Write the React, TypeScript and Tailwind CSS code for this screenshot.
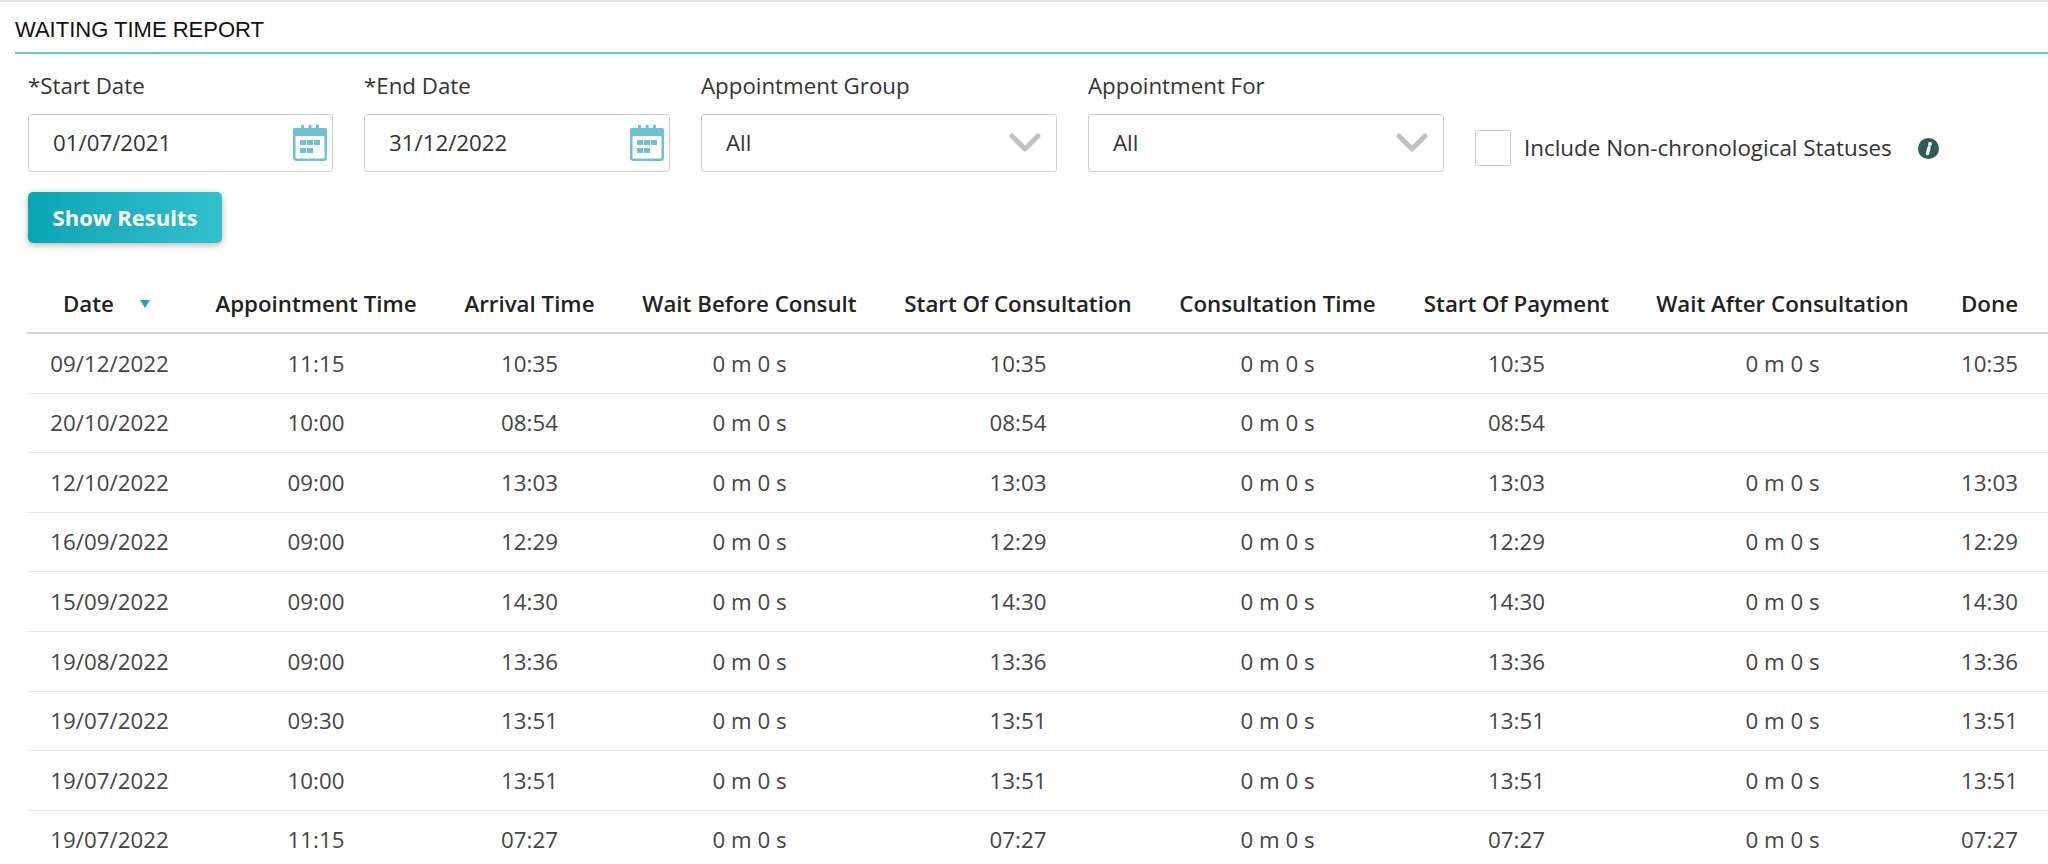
import React from 'react';

const COLS = 'grid grid-cols-[165px_248px_179px_261px_276px_243px_235px_297px_1fr]';

const HEADERS = [
  'Appointment Time',
  'Arrival Time',
  'Wait Before Consult',
  'Start Of Consultation',
  'Consultation Time',
  'Start Of Payment',
  'Wait After Consultation',
  'Done',
];

const Z = '0 m 0 s';

const ROWS: string[][] = [
  ['09/12/2022', '11:15', '10:35', Z, '10:35', Z, '10:35', Z, '10:35'],
  ['20/10/2022', '10:00', '08:54', Z, '08:54', Z, '08:54', '', ''],
  ['12/10/2022', '09:00', '13:03', Z, '13:03', Z, '13:03', Z, '13:03'],
  ['16/09/2022', '09:00', '12:29', Z, '12:29', Z, '12:29', Z, '12:29'],
  ['15/09/2022', '09:00', '14:30', Z, '14:30', Z, '14:30', Z, '14:30'],
  ['19/08/2022', '09:00', '13:36', Z, '13:36', Z, '13:36', Z, '13:36'],
  ['19/07/2022', '09:30', '13:51', Z, '13:51', Z, '13:51', Z, '13:51'],
  ['19/07/2022', '10:00', '13:51', Z, '13:51', Z, '13:51', Z, '13:51'],
  ['19/07/2022', '11:15', '07:27', Z, '07:27', Z, '07:27', Z, '07:27'],
];

function CalendarIcon() {
  return (
    <svg width="36" height="36" viewBox="0 0 36 36" fill="none">
      <rect x="9" y="0" width="3" height="5" fill="#6cc2d4" />
      <rect x="16.5" y="0" width="3" height="5" fill="#6cc2d4" />
      <rect x="24" y="0" width="3" height="5" fill="#6cc2d4" />
      <rect x="1" y="3" width="34" height="8" rx="2" fill="#6cc2d4" />
      <rect x="2.25" y="4.25" width="31.5" height="30.5" rx="2" stroke="#6cc2d4" strokeWidth="2.5" />
      <rect x="8" y="15" width="6" height="5" fill="#6cc2d4" />
      <rect x="15" y="15" width="6" height="5" fill="#6cc2d4" />
      <rect x="22" y="15" width="6" height="5" fill="#6cc2d4" />
      <rect x="8" y="23" width="6" height="5" fill="#6cc2d4" />
      <rect x="15" y="23" width="6" height="5" fill="#6cc2d4" />
    </svg>
  );
}

function Chevron() {
  return (
    <svg width="32" height="20" viewBox="0 0 32 20" fill="none">
      <path d="M3 3 L16 16 L29 3" stroke="#c2c2c2" strokeWidth="5" strokeLinecap="round" strokeLinejoin="round" />
    </svg>
  );
}

function InfoIcon() {
  return (
    <svg width="21" height="21" viewBox="0 0 21 21">
      <circle cx="10.5" cy="10.5" r="10.5" fill="#2d5a5b" />
      <circle cx="12" cy="6" r="2" fill="#fff" />
      <path d="M11.1 9.6 L9.4 15.6" stroke="#fff" strokeWidth="3.4" strokeLinecap="round" />
    </svg>
  );
}

function DateField({ label, value, width }: { label: string; value: string; width: string }) {
  return (
    <div className={width}>
      <p className="text-[22.3px] leading-[30px] text-[#333] mb-[13px]">{label}</p>
      <div className="flex items-center justify-between h-[58px] border border-[#cfcfcf] rounded-[3px] pl-[24px] pr-[4px]">
        <span className="text-[22.3px] text-[#333]">{value}</span>
        <CalendarIcon />
      </div>
    </div>
  );
}

function SelectField({ label }: { label: string }) {
  return (
    <div className="w-[356px]">
      <p className="text-[22.3px] leading-[30px] text-[#333] mb-[13px]">{label}</p>
      <div className="flex items-center justify-between h-[58px] border border-[#cfcfcf] rounded-[3px] pl-[24px] pr-[15px]">
        <span className="text-[22.3px] text-[#333]">All</span>
        <Chevron />
      </div>
    </div>
  );
}

export default function App() {
  return (
    <div className="min-h-screen bg-white border-t-2 border-[#e4e4de] font-['Open_Sans',sans-serif] overflow-hidden">
      {/* Title */}
      <div className="ml-[15px] pt-[15px] pb-[10px] border-b-2 border-[#6ec4d6]">
        <h1 className="font-['Liberation_Sans',Arial,sans-serif] text-[22px] leading-[25px] text-[#111]">
          WAITING TIME REPORT
        </h1>
      </div>

      {/* Filters */}
      <div className="pl-[28px] pt-[17px]">
        <div className="flex gap-[31px]">
          <DateField label="*Start Date" value="01/07/2021" width="w-[305px]" />
          <DateField label="*End Date" value="31/12/2022" width="w-[306px]" />
          <SelectField label="Appointment Group" />
          <SelectField label="Appointment For" />
          <div className="flex items-center self-end mb-[6px]">
            <div className="w-[36px] h-[36px] border border-[#cfcfcf] rounded-[3px]" />
            <span className="ml-[13px] text-[22.4px] text-[#333]">Include Non-chronological Statuses</span>
            <span className="ml-[26px] flex">
              <InfoIcon />
            </span>
          </div>
        </div>
        <button className="mt-[20px] h-[51px] w-[194px] rounded-[5px] bg-linear-to-r from-[#08a5b5] to-[#30bfcd] text-white font-bold text-[22px] shadow-[0_2px_7px_rgba(0,0,0,0.3)]">
          Show Results
        </button>
      </div>

      {/* Table */}
      <div className="mt-[32px] ml-[27px]">
        <div className={`${COLS} h-[59px] border-b-2 border-[#d5d5d5] items-center text-[22.3px] font-semibold text-[#222]`}>
          <div className="flex items-center justify-center pr-[6px]">
            <span>Date</span>
            <svg className="ml-[26px]" width="10" height="8" viewBox="0 0 10 8">
              <polygon points="0,0 10,0 5,8" fill="#1aa8b8" />
            </svg>
          </div>
          {HEADERS.map((h) => (
            <div key={h} className="text-center whitespace-nowrap">
              {h}
            </div>
          ))}
        </div>
        {ROWS.map((row, i) => (
          <div key={i} className={`${COLS} h-[59.6px] border-b border-[#e6e6e6] items-center text-[22.3px] text-[#444]`}>
            {row.map((cell, j) => (
              <div key={j} className="text-center whitespace-nowrap">
                {cell}
              </div>
            ))}
          </div>
        ))}
      </div>
    </div>
  );
}
